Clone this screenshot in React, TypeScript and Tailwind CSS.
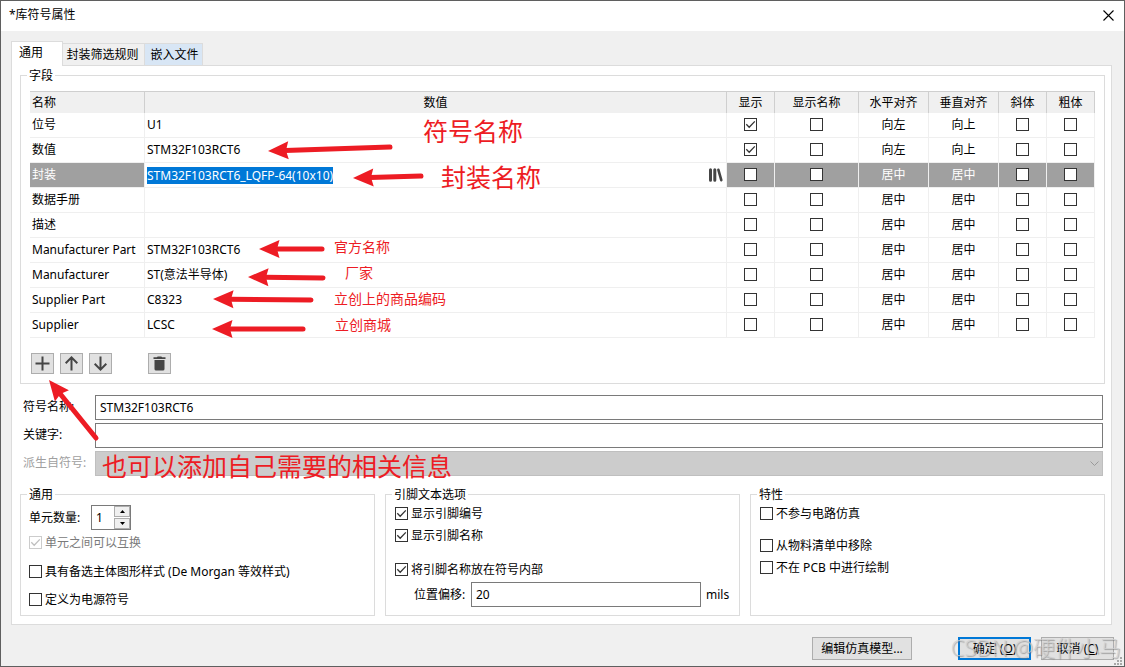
import { useState } from "react";
import type { ReactNode } from "react";

type Field = {
  name: string;
  value: string;
  visible?: boolean;
  hAlign: string;
  vAlign: string;
};

const initialFields: Field[] = [
  { name: "位号", value: "U1", visible: true, hAlign: "向左", vAlign: "向上" },
  { name: "数值", value: "STM32F103RCT6", visible: true, hAlign: "向左", vAlign: "向上" },
  { name: "封装", value: "STM32F103RCT6_LQFP-64(10x10)", hAlign: "居中", vAlign: "居中" },
  { name: "数据手册", value: "", hAlign: "居中", vAlign: "居中" },
  { name: "描述", value: "", hAlign: "居中", vAlign: "居中" },
  { name: "Manufacturer Part", value: "STM32F103RCT6", hAlign: "居中", vAlign: "居中" },
  { name: "Manufacturer", value: "ST(意法半导体)", hAlign: "居中", vAlign: "居中" },
  { name: "Supplier Part", value: "C8323", hAlign: "居中", vAlign: "居中" },
  { name: "Supplier", value: "LCSC", hAlign: "居中", vAlign: "居中" },
];

const arrows = [
  { from: [390, 147], to: [268, 151] },
  { from: [421, 176], to: [353, 178] },
  { from: [322, 249], to: [259, 249] },
  { from: [323, 278], to: [248, 277] },
  { from: [311, 300], to: [213, 299] },
  { from: [303, 329], to: [212, 329] },
  { from: [96, 438], to: [49, 380] },
];

type CheckProps = {
  checked?: boolean;
  disabled?: boolean;
  label?: string;
};

const Check = ({ checked = false, disabled = false, label }: CheckProps) => {
  const [on, setOn] = useState(checked);

  return (
    <span className="grid size-[13px] shrink-0">
      <input
        type="checkbox"
        aria-label={label}
        checked={on}
        disabled={disabled}
        onChange={(e) => setOn(e.target.checked)}
        className="peer col-start-1 row-start-1 size-[13px] appearance-none border border-[#333333] bg-white disabled:border-[#cccccc]"
      />
      <svg
        viewBox="0 0 13 13"
        className="pointer-events-none col-start-1 row-start-1 hidden size-[13px] text-[#333333] peer-checked:block peer-disabled:text-[#bfbfbf]"
      >
        <path d="M2.3 6.3 5.2 9.2 10.8 3.4" fill="none" stroke="currentColor" strokeWidth="1.3" />
      </svg>
    </span>
  );
};

const CheckRow = ({ text, checked, disabled, className }: { text: string; checked?: boolean; disabled?: boolean; className: string }) => (
  <label className={`flex h-[15px] items-center gap-[3px] whitespace-nowrap ${disabled ? "text-[#7a7a7a]" : ""} ${className}`}>
    <Check checked={checked} disabled={disabled} />
    {text}
  </label>
);

const Group = ({ title, className, children }: { title: string; className: string; children: ReactNode }) => (
  <fieldset className={`min-w-0 border border-[#dcdcdc] px-2 ${className}`}>
    <legend className="-ml-0.5 h-[15px] px-0.5 leading-[15px]">{title}</legend>
    {children}
  </fieldset>
);

const ToolButton = ({ label, className = "", children }: { label: string; className?: string; children: ReactNode }) => (
  <button
    aria-label={label}
    className={`flex h-[21px] w-[23px] items-center justify-center border border-[#adadad] bg-[#e1e1e1] text-[#454545] ${className}`}
  >
    {children}
  </button>
);

const FieldTable = () => {
  const [fields, setFields] = useState(initialFields);
  const selected = 2;
  const head = "h-[22px] border-t border-r border-[#cfcfcf] bg-[#f0f0f0] font-normal";

  const updateValue = (index: number, value: string) => {
    setFields(fields.map((field, i) => (i === index ? { ...field, value } : field)));
  };

  return (
    <table className="w-full table-fixed border-separate border-spacing-0">
      <thead>
        <tr>
          <th className={`w-[115px] px-0.5 text-left ${head}`}>名称</th>
          <th className={head}>数值</th>
          <th className={`w-12 ${head}`}>显示</th>
          <th className={`w-[84px] ${head}`}>显示名称</th>
          <th className={`w-[70px] ${head}`}>水平对齐</th>
          <th className={`w-[70px] ${head}`}>垂直对齐</th>
          <th className={`w-12 ${head}`}>斜体</th>
          <th className={`w-12 ${head}`}>粗体</th>
        </tr>
      </thead>
      <tbody>
        {fields.map((field, i) => {
          const active = i === selected;
          const cell = "h-[25px] border-r border-b border-[#efefef]";
          const tone = active ? "bg-[#a0a0a0] text-white" : "";
          const box = (label: string, checked?: boolean) => (
            <td className={`pb-0.5 ${cell} ${tone}`}>
              <div className="flex justify-center">
                <Check checked={checked} label={`${field.name} ${label}`} />
              </div>
            </td>
          );
          return (
            <tr key={field.name}>
              <td className={`px-0.5 whitespace-nowrap ${cell} ${tone}`}>{field.name}</td>
              <td className={`px-0.5 ${cell}`}>
                {active ? (
                  <div className="flex items-center justify-between">
                    <input
                      aria-label={field.name}
                      value={field.value}
                      onChange={(e) => updateValue(i, e.target.value)}
                      className="field-sizing-content h-[17px] bg-[#0078d7] text-white outline-none"
                    />
                    <button aria-label="浏览封装库" className="mr-px text-[#454545]">
                      <svg viewBox="0 0 14 14" className="size-3.5" fill="none" stroke="currentColor" strokeWidth="3" strokeLinecap="round">
                        <path d="M1.5 1.8v10.5M5.8 1.8v10.5" />
                        <path d="M9.4 1.8 12.3 12.2" strokeWidth="2.6" />
                      </svg>
                    </button>
                  </div>
                ) : (
                  field.value
                )}
              </td>
              {box("显示", field.visible)}
              {box("显示名称")}
              <td className={`text-center ${cell} ${tone}`}>{field.hAlign}</td>
              <td className={`text-center ${cell} ${tone}`}>{field.vAlign}</td>
              {box("斜体")}
              {box("粗体")}
            </tr>
          );
        })}
      </tbody>
    </table>
  );
};

const Annotations = () => (
  <div className="pointer-events-none absolute -inset-px overflow-hidden text-[#ed1c24]">
    <svg className="absolute top-0 left-0 h-[480px] w-[600px]">
      {arrows.map(({ from, to }, i) => {
        const dx = from[0] - to[0];
        const dy = from[1] - to[1];
        const angle = (Math.atan2(dy, dx) * 180) / Math.PI;
        return (
          <g key={i} transform={`translate(${to[0]} ${to[1]}) rotate(${angle})`}>
            <path d="M0 0 20.5-9 18 0 20.5 9Z" fill="currentColor" />
            <line x1="17" x2={Math.hypot(dx, dy)} y1="0" y2="0" stroke="currentColor" strokeWidth="5" strokeLinecap="round" />
          </g>
        );
      })}
    </svg>
    <span className="absolute top-[119px] left-[423px] text-[25px] leading-[25px]">符号名称</span>
    <span className="absolute top-[165px] left-[441px] text-[25px] leading-[25px]">封装名称</span>
    <span className="absolute top-[240px] left-[334px] text-sm leading-[14px]">官方名称</span>
    <span className="absolute top-[266px] left-[345px] text-sm leading-[14px]">厂家</span>
    <span className="absolute top-[292px] left-[334px] text-sm leading-[14px]">立创上的商品编码</span>
    <span className="absolute top-[318px] left-[335px] text-sm leading-[14px]">立创商城</span>
    <span className="absolute top-[454px] left-[102px] text-[25px] leading-[25px]">也可以添加自己需要的相关信息</span>
    <span className="absolute right-1 bottom-1 font-['Open_Sans','Noto_Sans_CJK_SC',sans-serif] text-[22px] leading-8 font-light whitespace-nowrap text-[#d0d0d0]/80 [text-shadow:1px_1px_1px_#7779]">
      CSDN @硬件小马
    </span>
  </div>
);

const App = () => {
  const [symbolName, setSymbolName] = useState("STM32F103RCT6");
  const [keywords, setKeywords] = useState("");
  const [units, setUnits] = useState(1);
  const [offset, setOffset] = useState("20");
  const textBox = "h-[25px] min-w-0 border border-[#7a7a7a] bg-white px-1 pb-px outline-none";

  return (
    <div className="relative flex min-h-screen flex-col border border-[#5f5f5f] bg-[#f0f0f0] font-['Noto_Sans','Noto_Sans_CJK_SC',sans-serif] text-[12px] leading-[16px] text-black">
      <header className="flex h-[30px] items-center justify-between bg-white pr-2 pb-0.5 pl-2">
        <h1>*库符号属性</h1>
        <button aria-label="关闭" className="p-0.5">
          <svg viewBox="0 0 11 11" className="size-[11px]" stroke="currentColor" strokeWidth="1.1">
            <path d="m.5.5 10 10m0-10-10 10" />
          </svg>
        </button>
      </header>

      <main className="flex flex-1 flex-col pt-2.5 pr-3 pl-2.5">
        <div role="tablist" className="flex items-end">
          <button role="tab" aria-selected="true" className="relative z-10 -mb-px h-[25px] w-[52px] border border-b-0 border-[#dcdcdc] bg-white pb-0.5 pl-[7px] text-left">
            通用
          </button>
          <button role="tab" aria-selected="false" className="h-[22px] w-[82px] border-t border-r border-[#dcdcdc] pr-0.5">
            封装筛选规则
          </button>
          <button role="tab" aria-selected="false" className="h-[22px] w-[58px] border-t border-r border-[#dcdcdc] bg-[#d8e6f5] pl-0.5">
            嵌入文件
          </button>
        </div>

        <section className="flex-1 border border-[#dcdcdc] bg-white pt-0.5 pr-1.5 pb-2 pl-2">
          <Group title="字段" className="pb-[9px]">
            <div className="px-px pt-2">
              <FieldTable />
              <div className="mt-[15px] flex gap-1.5 pl-px">
                <ToolButton label="添加字段">
                  <svg viewBox="0 0 15 15" className="size-[15px]" stroke="currentColor" strokeWidth="2">
                    <path d="M.5 7.5h14M7.5.5v14" />
                  </svg>
                </ToolButton>
                <ToolButton label="上移">
                  <svg viewBox="0 0 15 15" className="size-[15px]" fill="none" stroke="currentColor" strokeWidth="2">
                    <path d="M7.5 14.5V1.5M1.7 7.2l5.8-5.8 5.8 5.8" />
                  </svg>
                </ToolButton>
                <ToolButton label="下移">
                  <svg viewBox="0 0 15 15" className="size-[15px]" fill="none" stroke="currentColor" strokeWidth="2">
                    <path d="M7.5.5v13M1.7 7.8l5.8 5.8 5.8-5.8" />
                  </svg>
                </ToolButton>
                <ToolButton label="删除字段" className="ml-[30px]">
                  <svg viewBox="0 0 13 15" className="h-[15px] w-[13px]" fill="currentColor">
                    <path d="M.5 1.300h3.300L4.700.4h3.600l.9.9h3.300v1.600H.5zM1.500 4h10v9q0 1.600-1.600 1.600H3.100Q1.500 14.600 1.500 13z" />
                  </svg>
                </ToolButton>
              </div>
            </div>
          </Group>

          <div className="mt-[11px] grid grid-cols-[72px_1fr] items-center gap-y-[3px] pr-0.5 pl-[3px]">
            <label htmlFor="symbol-name" className="pb-px">符号名称:</label>
            <input id="symbol-name" value={symbolName} onChange={(e) => setSymbolName(e.target.value)} className={textBox} />
            <label htmlFor="keywords" className="pb-px">关键字:</label>
            <input id="keywords" value={keywords} onChange={(e) => setKeywords(e.target.value)} className={textBox} />
            <label htmlFor="derive" className="pb-px text-[#a0a0a0]">派生自符号:</label>
            <div className="grid items-center">
              <select id="derive" disabled className="col-start-1 row-start-1 h-[25px] appearance-none border border-[#bfbfbf] bg-[#cccccc]" />
              <svg viewBox="0 0 9 5" className="col-start-1 row-start-1 mr-1 h-[5px] w-[9px] justify-self-end" fill="none" stroke="#9a9a9a">
                <path d="m.5.5 4 4 4-4" />
              </svg>
            </div>
          </div>

          <div className="mt-[11px] grid grid-cols-3 gap-2.5">
            <Group title="通用" className="pb-2">
              <div className="mt-[3px] flex items-center">
                <label htmlFor="units" className="w-[62px]">单元数量:</label>
                <div className="flex h-[25px] w-10 border border-[#7a7a7a] bg-white">
                  <input
                    id="units"
                    value={units}
                    onChange={(e) => setUnits(Number(e.target.value) || 1)}
                    className="w-[22px] pl-1 outline-none"
                  />
                  <div className="flex flex-1 flex-col gap-px">
                    <button aria-label="增加" onClick={() => setUnits(units + 1)} className="flex flex-1 items-center justify-center border border-[#adadad] bg-[#f0f0f0]">
                      <svg viewBox="0 0 5 3" className="h-[3px] w-[5px]">
                        <path d="M0 3 2.5 0 5 3z" />
                      </svg>
                    </button>
                    <button aria-label="减少" onClick={() => setUnits(Math.max(1, units - 1))} className="flex flex-1 items-center justify-center border border-[#adadad] bg-[#f0f0f0]">
                      <svg viewBox="0 0 5 3" className="h-[3px] w-[5px]">
                        <path d="M0 0 2.5 3 5 0z" />
                      </svg>
                    </button>
                  </div>
                </div>
              </div>
              <CheckRow text="单元之间可以互换" checked disabled className="mt-[5px]" />
              <CheckRow text="具有备选主体图形样式 (De Morgan 等效样式)" className="mt-3.5" />
              <CheckRow text="定义为电源符号" className="mt-[13px]" />
            </Group>

            <Group title="引脚文本选项" className="pb-2">
              <CheckRow text="显示引脚编号" checked className="mt-1 ml-px" />
              <CheckRow text="显示引脚名称" checked className="mt-[7px] ml-px" />
              <CheckRow text="将引脚名称放在符号内部" checked className="mt-[19px] ml-px" />
              <div className="mt-[5px] flex items-center pl-5">
                <label htmlFor="offset" className="w-[57px] shrink-0">位置偏移:</label>
                <input id="offset" value={offset} onChange={(e) => setOffset(e.target.value)} className={`flex-1 ${textBox}`} />
                <span className="w-[30px] pl-[5px]">mils</span>
              </div>
            </Group>

            <Group title="特性" className="pb-2">
              <CheckRow text="不参与电路仿真" className="mt-1 ml-px" />
              <CheckRow text="从物料清单中移除" className="mt-[17px] ml-px" />
              <CheckRow text="不在 PCB 中进行绘制" className="mt-[7px] ml-px" />
            </Group>
          </div>
        </section>
      </main>

      <footer className="flex justify-end pt-3 pr-2.5 pb-1.5">
        <button className="h-[23px] w-[100px] border border-[#adadad] bg-[#e1e1e1]">编辑仿真模型...</button>
        <button className="ml-[46px] h-[23px] w-[73px] border-2 border-[#0078d7] bg-[#e1e1e1]">
          确定 (<u>O</u>)
        </button>
        <button className="ml-2.5 h-[23px] w-[73px] border border-[#adadad] bg-[#e1e1e1]">
          取消 (<u>C</u>)
        </button>
      </footer>

      <svg viewBox="0 0 8 8" className="absolute right-0.5 bottom-px size-2" fill="#a8a8a8">
        <path d="M6 0h2v2H6zM3 3h2v2H3zM6 3h2v2H6zM0 6h2v2H0zM3 6h2v2H3zM6 6h2v2H6z" />
      </svg>
      <Annotations />
    </div>
  );
};

export default App;
